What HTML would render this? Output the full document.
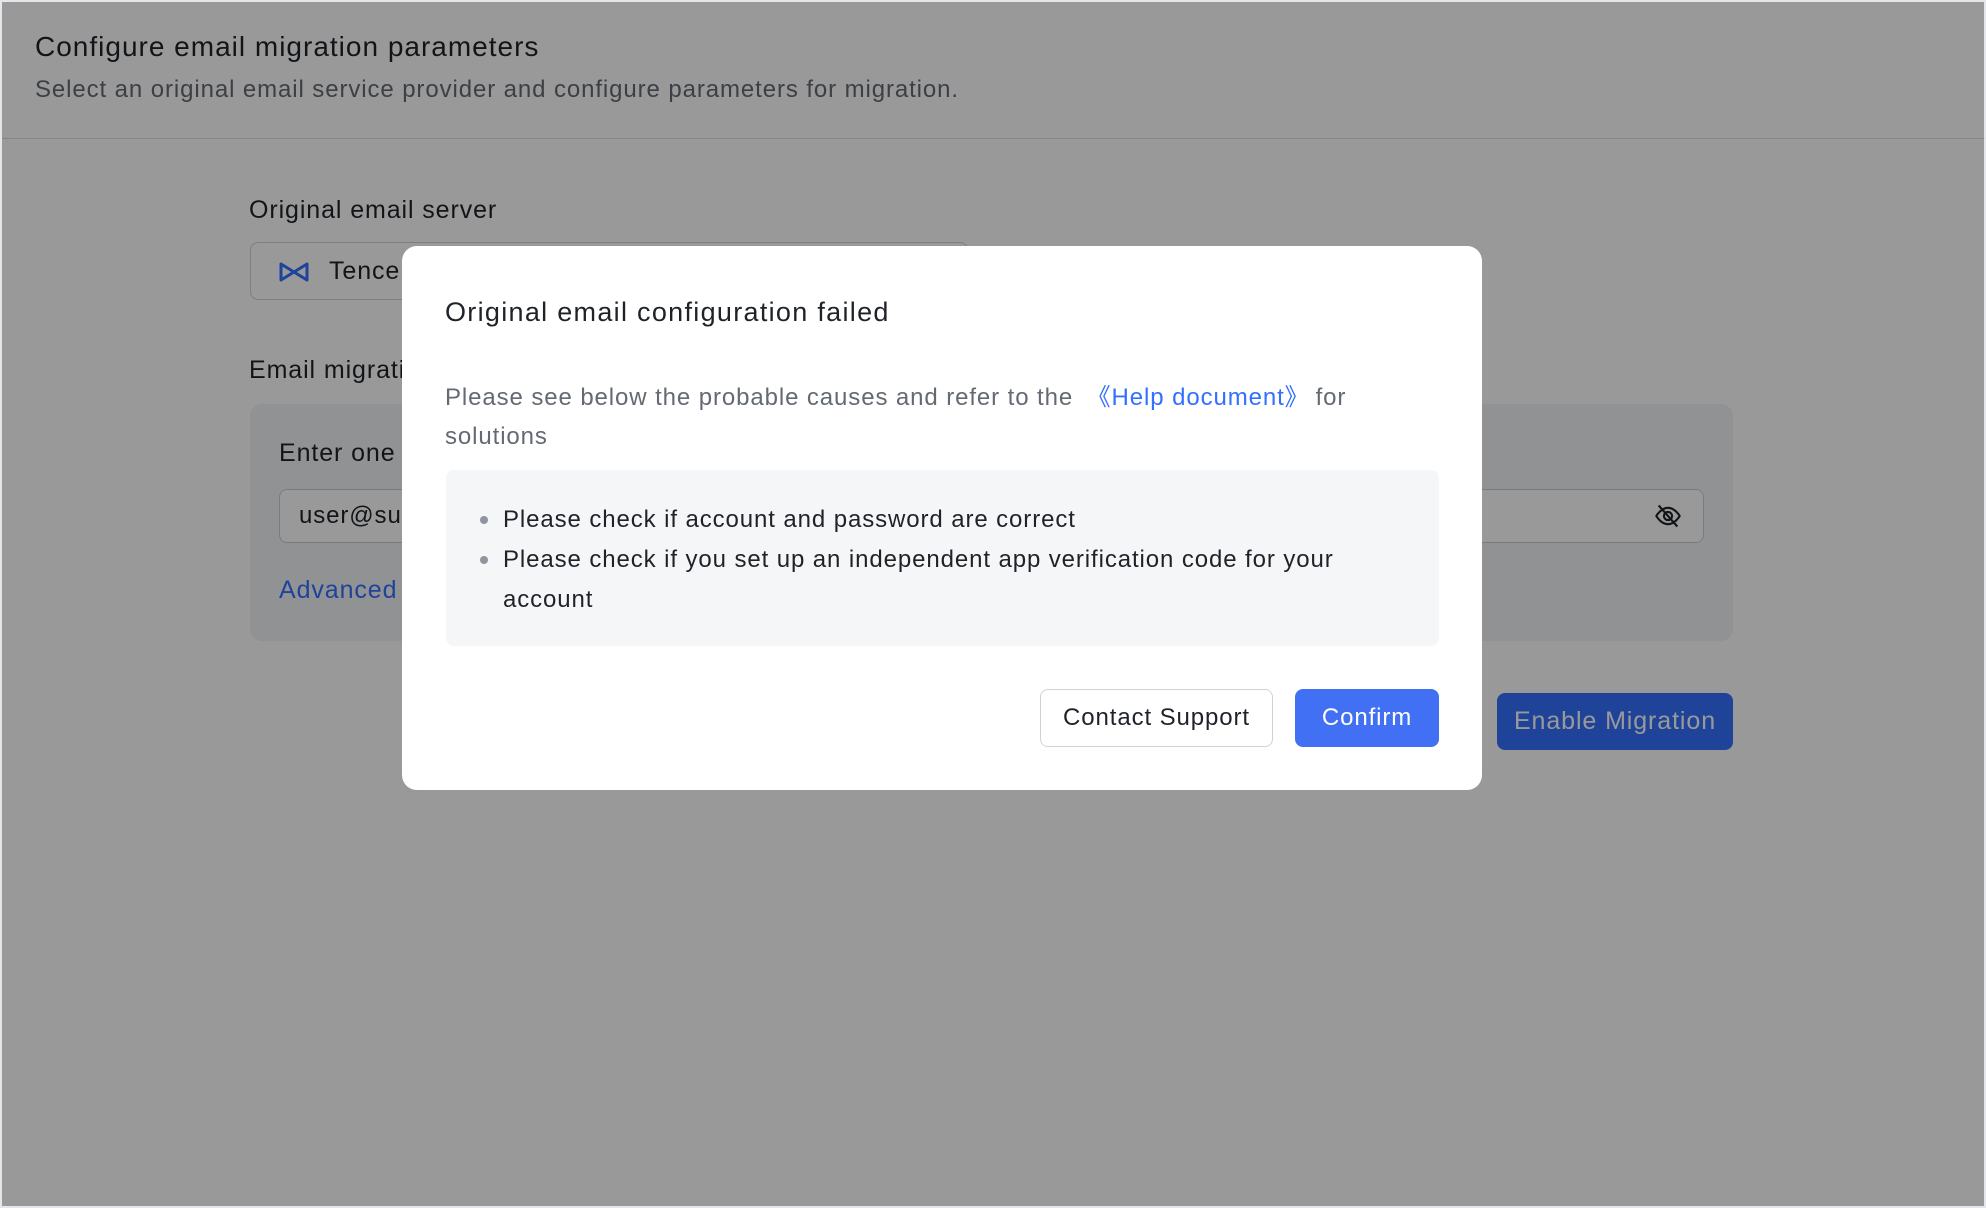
<!DOCTYPE html>
<html><head><meta charset="utf-8"><style>
*{box-sizing:border-box;margin:0;padding:0}
html,body{width:1986px;height:1208px;overflow:hidden;background:#fff;font-family:"Liberation Sans",sans-serif;color:#1f2329}
.page{position:absolute;left:0;top:0;width:1986px;height:1208px;border:2px solid #e5e6eb;background:#fff}
.abs{position:absolute;white-space:nowrap}
.ls{letter-spacing:.9px}
.overlay{position:absolute;left:2px;top:2px;right:2px;bottom:2px;background:rgba(0,0,0,.4)}
.modal{position:absolute;left:402px;top:246px;width:1080px;height:544px;background:#fff;border-radius:15px}
.btn{position:absolute;height:58px;border-radius:8px;font-size:24px;letter-spacing:.9px;display:flex;align-items:center;justify-content:center}
</style></head><body>
<div class="page">
  <div class="abs ls" style="left:33px;top:29px;font-size:28px;font-weight:500;letter-spacing:1px">Configure email migration parameters</div>
  <div class="abs ls" style="left:33px;top:74px;font-size:24px;color:#646a73">Select an original email service provider and configure parameters for migration.</div>
  <div class="abs" style="left:0;top:136px;width:1986px;height:1px;background:#dee0e3"></div>
  <div class="abs ls" style="left:247px;top:194px;font-size:25px;font-weight:500">Original email server</div>
  <div class="abs" style="left:248px;top:240px;width:718px;height:58px;border:1px solid #d0d3d6;border-radius:8px"></div>
  <svg class="abs" style="left:276px;top:259px" width="32" height="22" viewBox="0 0 32 22"><path d="M3 3L16 11L3 19ZM29 3L16 11L29 19Z" fill="none" stroke="#3370ff" stroke-width="3" stroke-linejoin="round"/></svg>
  <div class="abs ls" style="left:327px;top:255px;font-size:25px">Tencent Exmail</div>
  <div class="abs ls" style="left:247px;top:354px;font-size:25px;font-weight:500">Email migration account</div>
  <div class="abs" style="left:248px;top:402px;width:1483px;height:237px;background:#f2f3f5;border-radius:12px"></div>
  <div class="abs ls" style="left:277px;top:437px;font-size:25px">Enter one main administrator account</div>
  <div class="abs" style="left:277px;top:487px;width:1425px;height:54px;border:1px solid #c9cdd4;border-radius:8px;background:#fff"></div>
  <div class="abs ls" style="left:297px;top:500px;font-size:24px">user@support.com</div>
  <svg class="abs" style="left:1652px;top:500px" width="28" height="28" viewBox="0 0 24 24"><path d="M2 12s4-7 10-7 10 7 10 7-4 7-10 7S2 12 2 12z" fill="none" stroke="#1f2329" stroke-width="1.8"/><circle cx="12" cy="12" r="3.5" fill="none" stroke="#1f2329" stroke-width="1.8"/><path d="M4 3l16 18" stroke="#1f2329" stroke-width="1.8"/></svg>
  <div class="abs ls" style="left:277px;top:574px;font-size:25px;color:#3370ff">Advanced settings</div>
  <div class="btn" style="left:1495px;top:691px;width:236px;height:57px;background:#3370ff;color:#fff;font-size:25px">Enable Migration</div>
</div>
<div class="overlay"></div>
<div class="modal">
  <div class="abs" style="left:43px;top:51px;font-size:27px;font-weight:500;letter-spacing:1.3px">Original email configuration failed</div>
  <div class="abs ls" style="left:43px;top:132px;font-size:24px;color:#646a73;line-height:39px;white-space:normal;width:1010px">Please see below the probable causes and refer to the <span style="color:#3370ff;margin:0 6px">《Help document》</span>for<br>solutions</div>
  <div class="abs" style="left:44px;top:224px;width:993px;height:176px;background:#f5f6f7;border-radius:8px"></div>
  <div class="abs" style="left:78px;top:270px;width:8px;height:8px;border-radius:50%;background:#8f959e"></div>
  <div class="abs" style="left:78px;top:310px;width:8px;height:8px;border-radius:50%;background:#8f959e"></div>
  <div class="abs ls" style="left:101px;top:254px;font-size:24px;line-height:40px;white-space:normal;width:920px">Please check if account and password are correct<br>Please check if you set up an independent app verification code for your<br>account</div>
  <div class="btn" style="left:638px;top:443px;width:233px;border:1px solid #d0d3d6;background:#fff">Contact Support</div>
  <div class="btn" style="left:893px;top:443px;width:144px;background:#4170f5;color:#fff">Confirm</div>
</div>
</body></html>
